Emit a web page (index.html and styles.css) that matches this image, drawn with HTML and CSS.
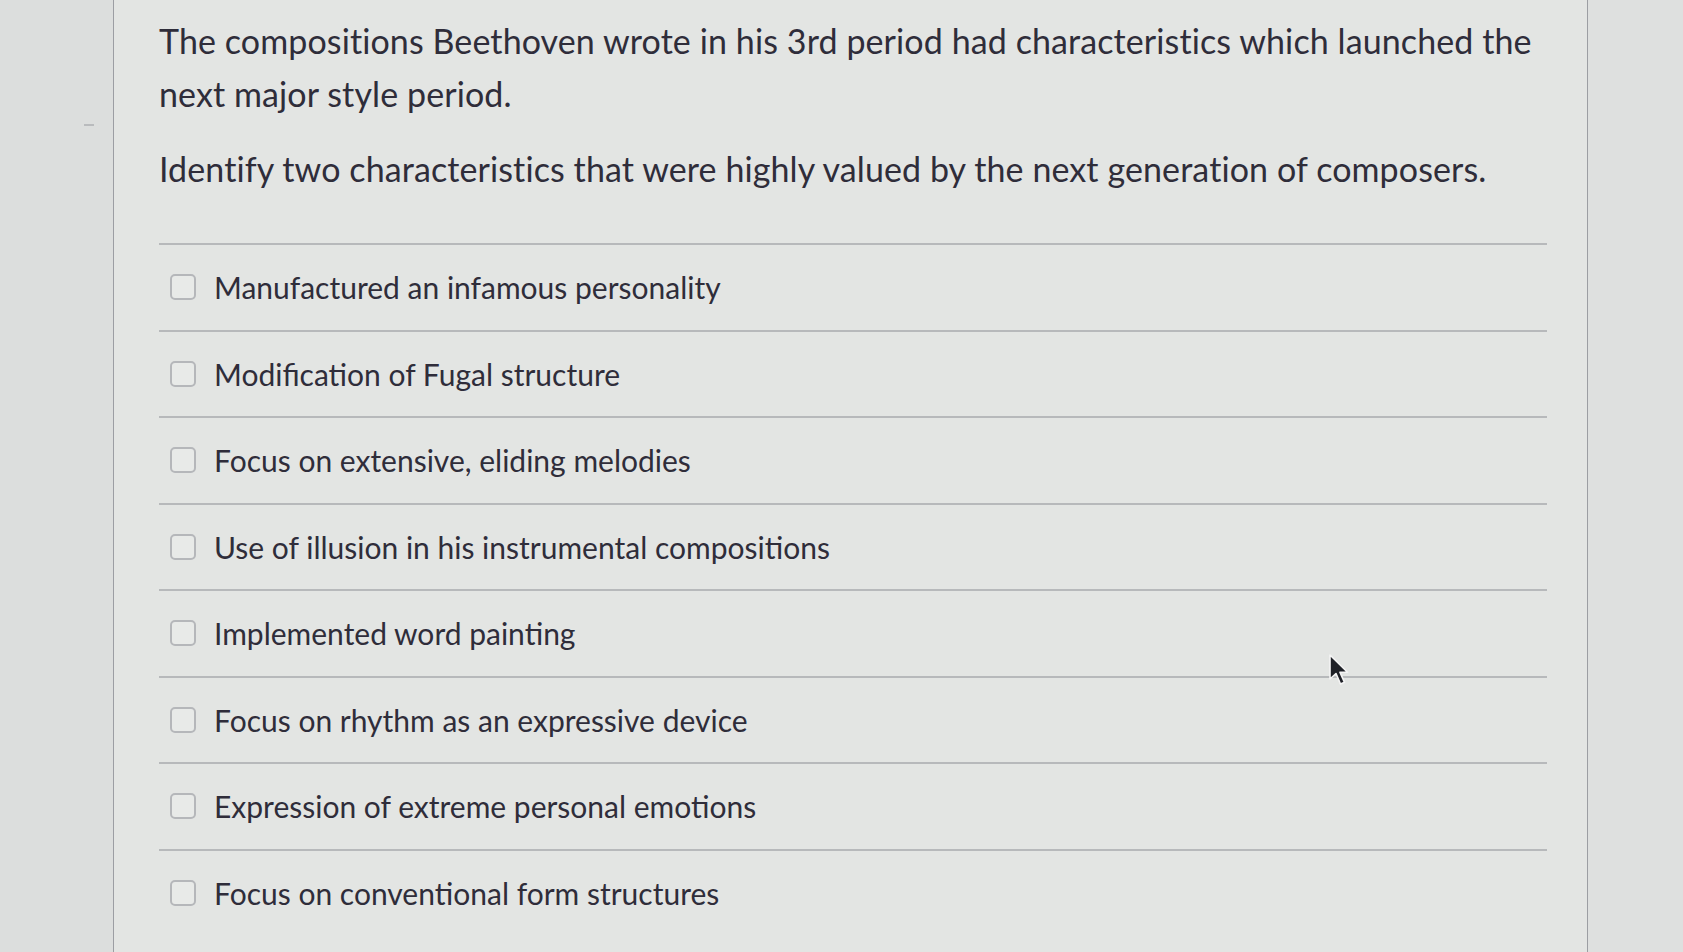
FILE: index.html
```
<!DOCTYPE html>
<html>
<head>
<meta charset="utf-8">
<link rel="stylesheet" href="styles.css">
</head>
<body>
<div class="page">
  <div class="sidebar"><span class="tick"></span></div>
  <div class="main">
    <p class="q">The compositions Beethoven wrote in his 3rd period had characteristics which launched the next major style period.</p>
    <p class="q q2">Identify two characteristics that were highly valued by the next generation of composers.</p>
    <ul class="options">
      <li class="opt"><span class="box"></span><span class="label">Manufactured an infamous personality</span></li>
      <li class="opt"><span class="box"></span><span class="label">Modification of Fugal structure</span></li>
      <li class="opt"><span class="box"></span><span class="label">Focus on extensive, eliding melodies</span></li>
      <li class="opt"><span class="box"></span><span class="label">Use of illusion in his instrumental compositions</span></li>
      <li class="opt"><span class="box"></span><span class="label">Implemented word painting</span></li>
      <li class="opt"><span class="box"></span><span class="label">Focus on rhythm as an expressive device</span></li>
      <li class="opt"><span class="box"></span><span class="label">Expression of extreme personal emotions</span></li>
      <li class="opt"><span class="box"></span><span class="label">Focus on conventional form structures</span></li>
    </ul>
    <svg class="cursor" width="22" height="34" viewBox="0 0 22 34"><path d="M2 1 L2 25 L8 19.5 L12.5 30 L16.5 28.3 L12 18.3 L19.5 18.3 Z" fill="#1e2026" stroke="#f4f4f4" stroke-width="1.6" stroke-linejoin="round"/></svg>
  </div>
  <div class="rightbar"></div>
</div>
</body>
</html>
```
FILE: styles.css
```
html, body {
  margin: 0;
  padding: 0;
}
body {
  width: 1683px;
  height: 952px;
  overflow: hidden;
  background: #dddfde;
  font-family: Lato, "Open Sans", sans-serif;
  color: #2f2d3a;
}
.page {
  display: flex;
  height: 952px;
}
.sidebar {
  width: 113px;
  flex: none;
  background: #dcdedd;
  position: relative;
}
.tick {
  position: absolute;
  left: 84px;
  top: 124px;
  width: 10px;
  height: 2px;
  background: #b9bbbd;
}
.main {
  width: 1475px;
  flex: none;
  box-sizing: border-box;
  border-left: 1px solid #9c9ea3;
  border-right: 1px solid #9c9ea3;
  background: #e3e5e3;
  padding: 14px 40px 0 45px;
  position: relative;
}
.rightbar {
  flex: 1;
  background: #dee0df;
}
.q {
  margin: 0;
  font-size: 34px;
  line-height: 53px;
  letter-spacing: 0.1px;
}
.q2 {
  margin-top: 22px;
}
.options {
  list-style: none;
  margin: 48px 0 0 0;
  padding: 0;
}
.opt {
  display: flex;
  align-items: center;
  height: 84.5px;
  border-top: 2px solid #b7b9bb;
  padding-left: 11px;
}
.box {
  width: 22px;
  height: 22px;
  border: 2px solid #b5b7ba;
  border-radius: 5px;
  background: #e8eae8;
  flex: none;
  margin-right: 18px;
}
.label {
  font-size: 30px;
  line-height: 40px;
  color: #2f2d3a;
}
.cursor {
  position: absolute;
  left: 1214px;
  top: 654px;
}
```
